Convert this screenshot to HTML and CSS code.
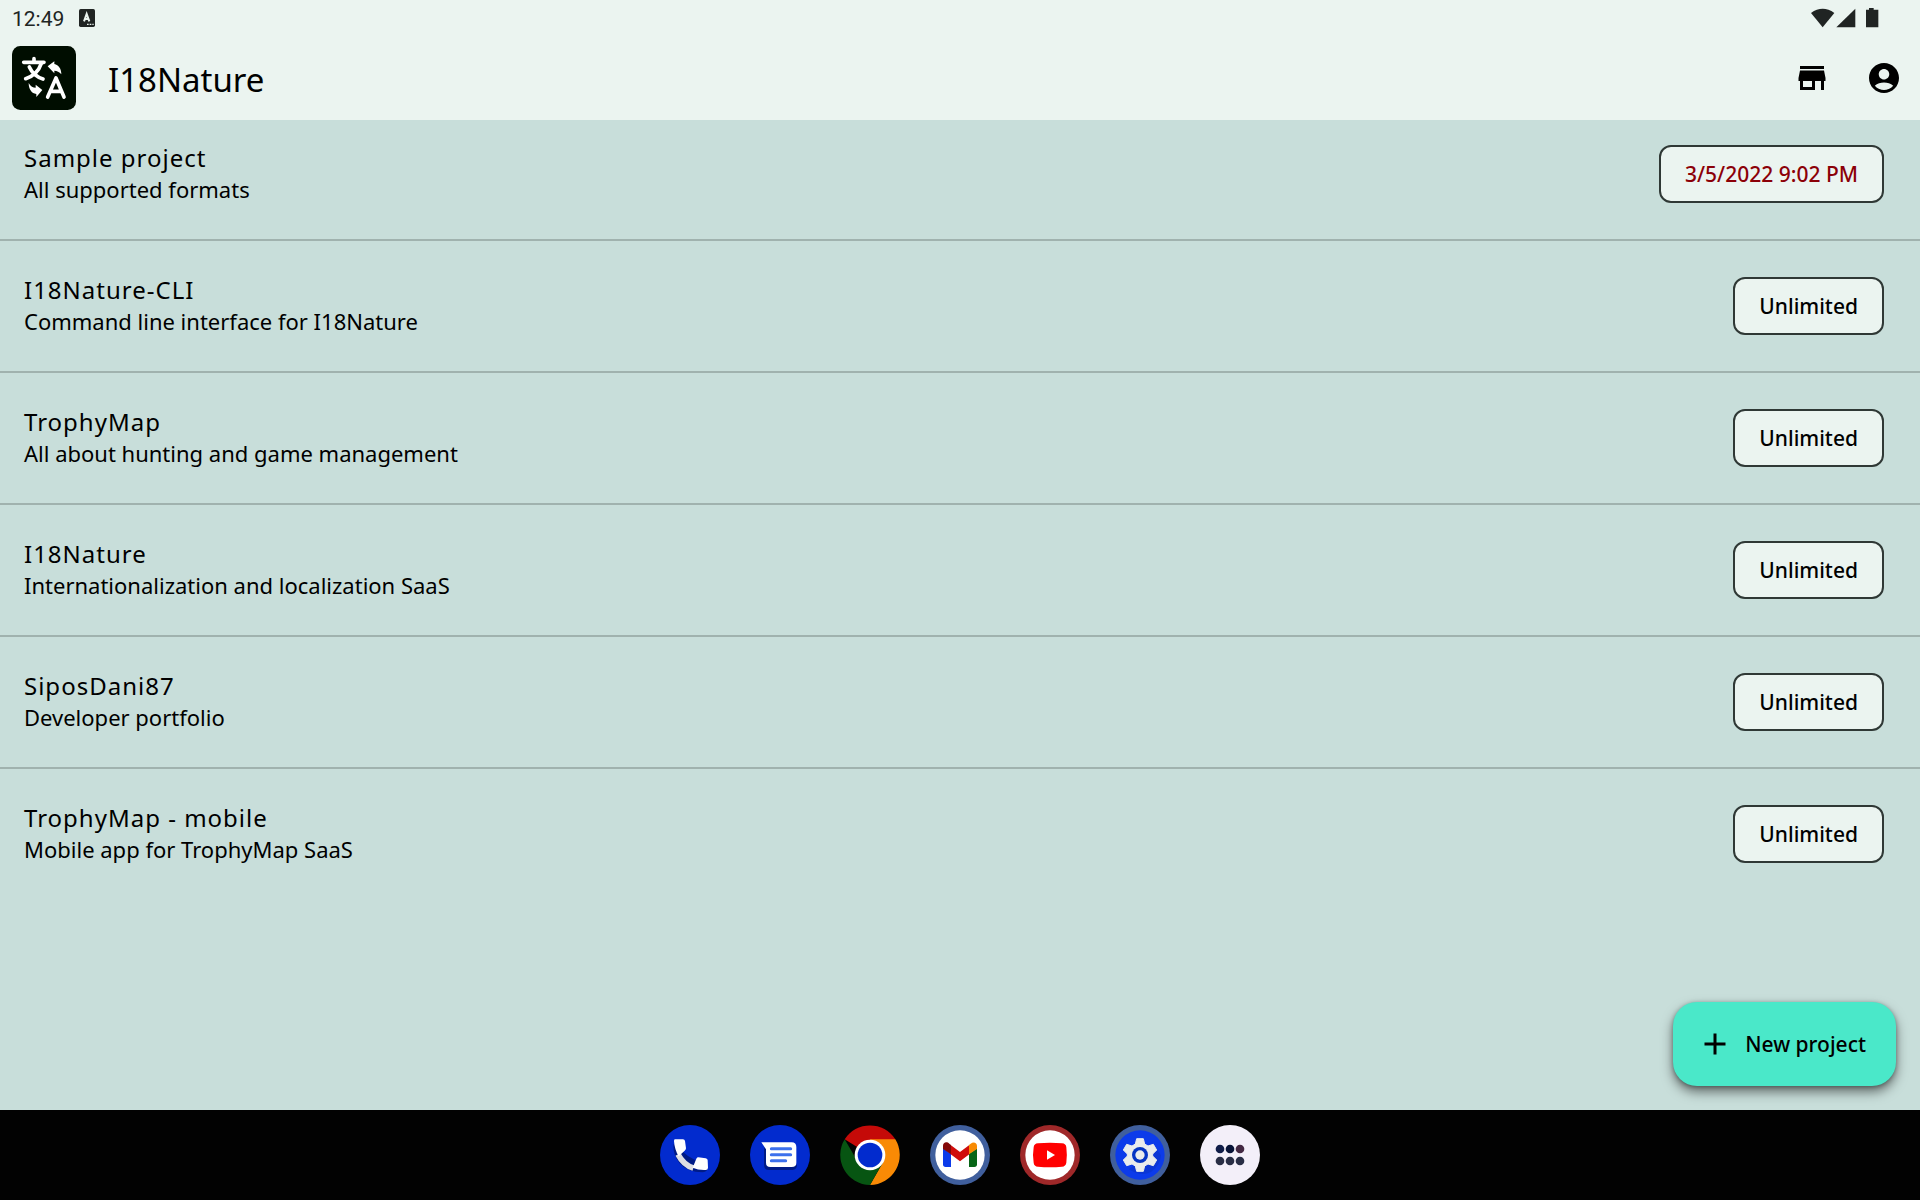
FILE: index.html
```html
<!DOCTYPE html>
<html lang="en">
<head>
<meta charset="utf-8">
<meta name="viewport" content="width=device-width, initial-scale=1">
<title>I18Nature</title>
<link rel="stylesheet" href="styles.css">
</head>
<body>
<header class="top">
  <div class="status">
    <div class="status-group">
      <time class="clock">12:49</time>
      <svg class="notice" width="16" height="18" viewBox="0 0 48 54" aria-hidden="true"><rect width="48" height="54" rx="5" fill="#202423"/><path d="M15 37 23 15l8 22M18 30h10" fill="none" stroke="#ebf4f0" stroke-width="6"/><path d="M24 46h5m3 0h5m3 0h4" stroke="#ebf4f0" stroke-width="4"/></svg>
    </div>
    <div class="status-group system">
      <svg width="68" height="20" viewBox="0 0 204 60" fill="#202423" aria-hidden="true"><path d="M0 15Q35-10 70 15L35 58Z"/><path d="M76 58 133 2V58Z"/><path d="M165 5h9V0h14v5h14v53h-37Z"/></svg>
    </div>
  </div>
  <div class="appbar">
    <svg class="logo" width="64" height="64" viewBox="0 0 192 192" role="img" aria-label="I18Nature logo"><rect width="192" height="192" rx="25" fill="#000d00"/><g fill="none" stroke="#fff" stroke-width="11" stroke-linecap="round" stroke-linejoin="round"><path d="M66 38v9M35 49h61"/><path d="M88 52C80 76 62 91 41 98M52 63c8 18 22 30 41 36"/><path d="M107 153 132 96 156 153M115 136h34"/></g><g fill="#fff"><path d="M107 61 127 46v8c13 3 21 14 21 31-6-8-13-10-21-11v8Z"/><path d="M50 111c6 11 13 14 21 14v-9l20 16-18 21v-9c-14-2-23-14-23-33Z"/></g></svg>
    <h1 class="app-title">I18Nature</h1>
    <nav class="actions" aria-label="Account">
      <button class="icon-button" type="button" aria-label="Store"><svg width="36" height="36" viewBox="0 0 24 24"><path d="M20 4H4v2h16V4zm1 10v-2l-1-5H4l-1 5v2h1v6h10v-6h4v6h2v-6h1zm-9 4H6v-4h6v4z"/></svg></button>
      <button class="icon-button" type="button" aria-label="Profile"><svg width="36" height="36" viewBox="0 0 24 24"><path d="M12 2C6.480 2 2 6.480 2 12s4.480 10 10 10 10-4.480 10-10S17.520 2 12 2zm0 4c1.930 0 3.500 1.570 3.500 3.500S13.930 13 12 13s-3.500-1.570-3.500-3.500S10.070 6 12 6zm0 14c-2.030 0-4.430-.820-6.140-2.880C7.550 15.800 9.680 15 12 15s4.450.800 6.140 2.120C16.430 19.180 14.030 20 12 20z"/></svg></button>
    </nav>
  </div>
</header>

<main class="content">
  <ul class="projects">
    <li class="project"><div class="info"><h2 class="name">Sample project</h2><p class="summary">All supported formats</p></div><button class="chip expired" type="button">3/5/2022 9:02 PM</button></li>
    <li class="project"><div class="info"><h2 class="name">I18Nature-CLI</h2><p class="summary">Command line interface for I18Nature</p></div><button class="chip" type="button">Unlimited</button></li>
    <li class="project"><div class="info"><h2 class="name">TrophyMap</h2><p class="summary">All about hunting and game management</p></div><button class="chip" type="button">Unlimited</button></li>
    <li class="project"><div class="info"><h2 class="name">I18Nature</h2><p class="summary">Internationalization and localization SaaS</p></div><button class="chip" type="button">Unlimited</button></li>
    <li class="project"><div class="info"><h2 class="name">SiposDani87</h2><p class="summary">Developer portfolio</p></div><button class="chip" type="button">Unlimited</button></li>
    <li class="project"><div class="info"><h2 class="name">TrophyMap - mobile</h2><p class="summary">Mobile app for TrophyMap SaaS</p></div><button class="chip" type="button">Unlimited</button></li>
  </ul>
  <button class="new-project" type="button"><svg width="36" height="36" viewBox="0 0 24 24" aria-hidden="true"><path d="M19 13h-6v6h-2v-6H5v-2h6V5h2v6h6v2z"/></svg>New project</button>
</main>

<footer class="dock">
  <button class="dock-app" type="button" aria-label="Phone"><svg viewBox="0 0 180 180"><circle cx="90" cy="90" r="90" fill="#022bce"/><path d="M40 57q-1 35 20 59t68 26q15-1 16-15l-60-34Z" fill="#001b86"/><path d="M54 88C65 109 77 122 100 129" fill="none" stroke="#dedfe3" stroke-width="17"/><path d="M44 43h25q5 0 6 5l3 22q0 4-4 7L56 94Q44 75 42 49q0-5 2-6ZM98 128l11-27q2-4 6-4l22 3q6 1 6 6l1 22q0 7-7 7-22 1-39-7Z" fill="#fff"/></svg></button>
  <button class="dock-app" type="button" aria-label="Messages"><svg viewBox="0 0 180 180"><circle cx="90" cy="90" r="90" fill="#022bce"/><path d="M42 67v52q0 16 15 16h70q14-1 14-15Z" fill="#001b86"/><path d="M34 52h91q14 0 14 14v47q0 13-14 13H61q-13 0-13-13V73Z" fill="#fff"/><path d="M64 71h58M64 89h58M64 107h43" stroke="#3c70ec" stroke-width="9" stroke-linecap="round"/></svg></button>
  <button class="dock-app" type="button" aria-label="Chrome"><svg viewBox="0 0 180 180"><path d="M90 90 14 43A90 90 0 0 1 166 43Z" fill="#c50a08"/><path d="M90 43h76a90 90 0 0 1-76 137l40-70Z" fill="#f98a05"/><path d="M14 43A90 90 0 0 0 90 180l39-68-39-2-38-2Z" fill="#075512"/><circle cx="90" cy="90" r="46" fill="#fff"/><circle cx="90" cy="90" r="37" fill="#022bce"/></svg></button>
  <button class="dock-app" type="button" aria-label="Gmail"><svg viewBox="0 0 180 180"><circle cx="90" cy="90" r="90" fill="#405f9d"/><circle cx="90" cy="90" r="74" fill="#fff"/><path d="M39 70 63 86v40H47q-8 0-8-8Z" fill="#0c3bea"/><path d="M117 86l24-16v48q0 8-8 8h-16Z" fill="#076516"/><path d="M62 60l28 21 28-21v28l-28 21-28-21Z" fill="#d00d0b"/><path d="M39 62c0-11 12-14 19-6l5 4v28L39 72Z" fill="#850909"/><path d="M117 60l5-4c8-7 19-4 19 7v9l-24 16Z" fill="#f88b04"/></svg></button>
  <button class="dock-app" type="button" aria-label="YouTube"><svg viewBox="0 0 180 180"><circle cx="90" cy="90" r="90" fill="#9f2829"/><circle cx="90" cy="90" r="74" fill="#fff"/><path d="M54 55q36-3 72 0 12 1 13 12 3 23 0 46-2 11-13 12-36 3-72 0-12-1-13-12-4-23 0-46 1-11 13-12Z" fill="#f00"/><path d="M81 76v28l24-14Z" fill="#fff"/></svg></button>
  <button class="dock-app" type="button" aria-label="Settings"><svg viewBox="0 0 180 180"><circle cx="90" cy="90" r="90" fill="#405f9d"/><circle cx="90" cy="90" r="74" fill="#0c3bea"/><path d="M57 133 137 71q9 8 16 20-2 29-29 49-31 17-67-7Z" fill="#0b36d5"/><path d="M80 41h20l4 16 10 6 16-5 10 17-12 12v6l12 12-10 17-16-5-10 6-4 16H80l-4-16-10-6-16 5-10-17 12-12v-6L40 75l10-17 16 5 10-6Z" fill="#e9ecec" stroke="#e9ecec" stroke-width="3" stroke-linejoin="round"/><circle cx="90" cy="90" r="24" fill="#0535c4"/><circle cx="90" cy="90" r="14" fill="#e9ecec"/></svg></button>
  <button class="dock-app" type="button" aria-label="All apps"><svg viewBox="0 0 180 180"><circle cx="90" cy="90" r="90" fill="#f3eff9"/><g fill="#282d45"><circle cx="60" cy="72" r="13" fill="#101d49"/><circle cx="90" cy="72" r="13" fill="#081438"/><circle cx="120" cy="72" r="13" fill="#432843"/><circle cx="60" cy="108" r="13"/><circle cx="90" cy="108" r="13"/><circle cx="120" cy="108" r="13"/></g></svg></button>
</footer>
</body>
</html>
```
FILE: styles.css
```css
* { box-sizing: border-box; }

body {
  margin: 0;
  min-height: 100vh;
  display: flex;
  flex-direction: column;
  background: #c8deda;
  color: #000;
  font-family: "Noto Sans", sans-serif;
}

h1, h2, p, ul { margin: 0; padding: 0; font-weight: 400; }

button {
  font: inherit;
  color: inherit;
  border: 0;
  padding: 0;
  background: none;
  cursor: pointer;
}

svg { display: block; }

.top { background: #ebf4f0; }

.status {
  height: 36px;
  padding: 0 41px 0 12px;
  display: flex;
  align-items: center;
  justify-content: space-between;
  color: #202423;
}

.status-group { display: flex; align-items: center; gap: 15px; }

.clock { padding-top: 2px; font: 21px/34px Roboto, sans-serif; }

.appbar {
  height: 84px;
  padding: 0 18px 0 12px;
  display: flex;
  align-items: center;
}

.app-title {
  margin-left: 32px;
  padding-top: 4px;
  font-size: 33px;
  line-height: 44px;
}

.actions { margin-left: auto; display: flex; gap: 36px; }

.content {
  flex: 1;
  display: flex;
  flex-direction: column;
}

.projects { list-style: none; }

.project {
  padding: 32px 36px 32px 24px;
  display: flex;
  align-items: center;
  justify-content: space-between;
  gap: 24px;
}

.project:first-child { padding-top: 21px; }
.project + .project { border-top: 2px solid #a0b2ae; }

.info { padding-bottom: 4px; }

.name {
  font-size: 24px;
  line-height: 34px;
  letter-spacing: 1px;
}

.summary { font-size: 22px; line-height: 28px; }

.chip {
  height: 58px;
  padding: 0 24px;
  border: 2px solid #2f3835;
  border-radius: 12px;
  background: #ebf4f0;
  font-size: 21px;
  font-weight: 500;
  white-space: nowrap;
}

.expired { color: #8b0008; }

.new-project {
  margin: auto 24px 24px auto;
  height: 84px;
  padding: 0 30px 0 24px;
  display: flex;
  align-items: center;
  gap: 12px;
  border-radius: 24px;
  background: #4ae8c9;
  box-shadow: 0 6px 12px rgba(0, 0, 0, .5), 0 1px 4px rgba(0, 0, 0, .3);
  font-size: 21px;
  font-weight: 500;
}

.dock {
  height: 90px;
  display: flex;
  align-items: center;
  justify-content: center;
  gap: 30px;
  background: #020202;
}

.dock-app, .dock-app svg { width: 60px; height: 60px; }
```
